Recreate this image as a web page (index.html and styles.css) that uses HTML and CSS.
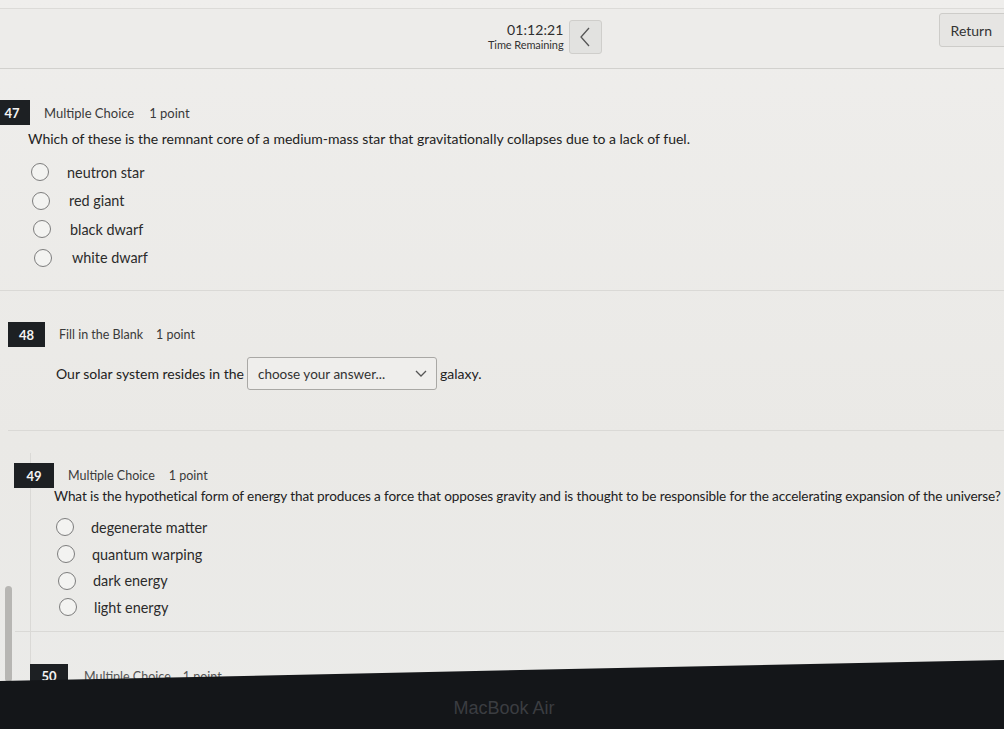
FILE: index.html
```html
<!DOCTYPE html>
<html>
<head>
<meta charset="utf-8">
<link rel="stylesheet" href="styles.css">
</head>
<body>
<div class="screen">
  <div class="header">
    <div class="timer-group">
      <div class="timer">
        <div class="time">01:12:21</div>
        <div class="time-label">Time Remaining</div>
      </div>
      <button class="collapse-btn" aria-label="collapse">
        <svg width="12" height="20" viewBox="0 0 12 20"><path d="M10 1 L2 10 L10 19" fill="none" stroke="#555" stroke-width="1.3"/></svg>
      </button>
    </div>
    <button class="return-btn">Return</button>
  </div>

  <div class="question q47">
    <div class="q-head">
      <span class="badge">47</span>
      <span class="q-type">Multiple Choice</span>
      <span class="q-points">1 point</span>
    </div>
    <div class="q-text">Which of these is the remnant core of a medium-mass star that gravitationally collapses due to a lack of fuel.</div>
    <ul class="options">
      <li><span class="radio"></span><span class="opt">neutron star</span></li>
      <li><span class="radio"></span><span class="opt">red giant</span></li>
      <li><span class="radio"></span><span class="opt">black dwarf</span></li>
      <li><span class="radio"></span><span class="opt">white dwarf</span></li>
    </ul>
  </div>

  <div class="question q48">
    <div class="q-head">
      <span class="badge">48</span>
      <span class="q-type small">Fill in the Blank</span>
      <span class="q-points small">1 point</span>
    </div>
    <div class="blank-line">
      <span>Our solar system resides in the</span>
      <span class="select">
        <span class="select-text">choose your answer...</span>
        <svg width="12" height="8" viewBox="0 0 12 8"><path d="M1 1 L6 6 L11 1" fill="none" stroke="#555" stroke-width="1.3"/></svg>
      </span>
      <span>galaxy.</span>
    </div>
  </div>

  <div class="lower">
    <div class="question q49">
      <div class="q-head">
        <span class="badge">49</span>
        <span class="q-type small">Multiple Choice</span>
        <span class="q-points small">1 point</span>
      </div>
      <div class="q-text">What is the hypothetical form of energy that produces a force that opposes gravity and is thought to be responsible for the accelerating expansion of the universe?</div>
      <ul class="options">
        <li><span class="radio"></span><span class="opt">degenerate matter</span></li>
        <li><span class="radio"></span><span class="opt">quantum warping</span></li>
        <li><span class="radio"></span><span class="opt">dark energy</span></li>
        <li><span class="radio"></span><span class="opt">light energy</span></li>
      </ul>
    </div>

    <div class="question q50">
      <div class="q-head">
        <span class="badge">50</span>
        <span class="q-type small">Multiple Choice</span>
        <span class="q-points small">1 point</span>
      </div>
    </div>
  </div>

  <div class="scrollbar"></div>
  <div class="bezel"><span class="brand">MacBook Air</span></div>
</div>
</body>
</html>
```

FILE: styles.css
```css
* { box-sizing: border-box; }
html, body {
  margin: 0;
  padding: 0;
  width: 1004px;
  height: 729px;
  overflow: hidden;
  background: #ebeae7;
  font-family: Lato, "Open Sans", sans-serif;
  color: #2a2a2a;
}
.screen {
  position: relative;
  width: 1004px;
  height: 729px;
  overflow: hidden;
  background: linear-gradient(180deg, #efeeec 0%, #eae9e6 60%, #ebebe9 100%);
}

/* header */
.header {
  margin-top: 8px;
  height: 61px;
  border-top: 1px solid #dcdbd8;
  border-bottom: 1px solid #d2d1ce;
  display: flex;
  align-items: center;
  background: #edecea;
}
.timer-group {
  display: flex;
  align-items: center;
  gap: 5px;
  margin-left: 488px;
  margin-top: -4px;
}
.timer {
  text-align: right;
  line-height: 1;
}
.time {
  font-size: 14px;
  color: #2f2f2f;
  letter-spacing: 0.1px;
}
.time-label {
  font-size: 11px;
  color: #333;
  margin-top: 2px;
  letter-spacing: -0.1px;
}
.collapse-btn {
  width: 33px;
  height: 34px;
  background: #e2e2e0;
  border: 1px solid #cfcecb;
  border-radius: 3px;
  display: flex;
  align-items: center;
  justify-content: center;
  padding: 0;
}
.return-btn {
  margin-left: auto;
  margin-right: -6px;
  margin-top: -17px;
  height: 34px;
  padding: 0 17px 0 11px;
  background: #e6e5e3;
  border: 1px solid #cdccc9;
  border-radius: 3px;
  font-family: Lato, sans-serif;
  font-size: 14px;
  color: #333;
}

/* questions */
.question {
  border-bottom: 1px solid #dad9d6;
}
.q-head {
  display: flex;
  align-items: center;
  height: 25px;
}
.badge {
  display: inline-flex;
  align-items: center;
  justify-content: center;
  height: 25px;
  background: #1d2023;
  color: #f4f4f4;
  font-weight: 700;
  font-size: 13px;
}
.q-type, .q-points {
  font-size: 13px;
  color: #3a3a3a;
}
.q-type.small, .q-points.small { font-size: 12.5px; }
.q-text {
  font-size: 14px;
  color: #222;
  white-space: nowrap;
}
.options {
  list-style: none;
  margin: 0;
  padding: 0;
}
.options li {
  display: flex;
  align-items: center;
  font-size: 14.4px;
  color: #2b2b2b;
}
.radio {
  width: 18px;
  height: 18px;
  border: 1.3px solid #7d7d7d;
  border-radius: 50%;
  background: #f3f3f1;
  flex: none;
}

/* q47 */
.q47 { padding: 31px 0 18px 0; }
.q47 .badge { width: 36px; margin-left: -6px; }
.q47 .q-type { margin-left: 14px; }
.q47 .q-points { margin-left: 15px; }
.q47 .q-text { margin: 4px 0 0 28px; font-size: 14px; height: 20px; line-height: 20px; }
.q47 .options { margin: 9px 0 0 31px; }
.q47 .options li { height: 28.5px; }
.q47 .options li:nth-child(1) .opt { margin-left: 18px; }
.q47 .options li:nth-child(2) { padding-left: 1px; }
.q47 .options li:nth-child(2) .opt { margin-left: 19px; }
.q47 .options li:nth-child(3) { padding-left: 2px; }
.q47 .options li:nth-child(3) .opt { margin-left: 19px; }
.q47 .options li:nth-child(4) { padding-left: 3px; }
.q47 .options li:nth-child(4) .opt { margin-left: 20px; }

/* q48 */
.q48 { padding: 31px 0 40px 0; margin-left: 8px; }
.q48 .badge { width: 37px; }
.q48 .q-type { margin-left: 14px; }
.q48 .q-points { margin-left: 13px; }
.blank-line {
  display: flex;
  align-items: center;
  gap: 3px;
  margin: 10px 0 0 48px;
  font-size: 14px;
  color: #222;
}
.select {
  width: 190px;
  height: 33px;
  border: 1px solid #a9a8a5;
  border-radius: 3px;
  background: #efeeec;
  display: flex;
  align-items: center;
  justify-content: space-between;
  padding: 0 9px 0 10px;
  font-size: 13.5px;
  color: #333;
}

/* lower area */
.lower { position: relative; }
.lower::before {
  content: "";
  position: absolute;
  left: 30px;
  top: 22px;
  bottom: -60px;
  border-left: 1px solid #dad9d6;
}

/* q49 */
.q49 { padding: 32px 0 10px 0; margin-left: 15px; }
.q49 .badge { width: 40px; margin-left: -1px; position: relative; }
.q49 .q-type { margin-left: 14px; }
.q49 .q-points { margin-left: 14px; }
.q49 .q-text { margin: -2px 0 0 39px; font-size: 13.6px; letter-spacing: -0.12px; height: 20px; line-height: 20px; }
.q49 .options { margin: 8px 0 0 41px; }
.q49 .options li { height: 26.7px; }
.q49 .options li .opt { margin-left: 17px; }
.q49 .options li:nth-child(2) { padding-left: 1px; }
.q49 .options li:nth-child(3) { padding-left: 2px; }
.q49 .options li:nth-child(4) { padding-left: 3px; }

/* q50 */
.q50 { padding: 32px 0 0 0; margin-left: 30px; border-bottom: none; }
.q50 .badge { width: 38px; position: relative; }
.q50 .q-type { margin-left: 16px; color: #555; }
.q50 .q-points { margin-left: 12px; color: #555; }

.scrollbar {
  position: absolute;
  left: 5px;
  top: 586px;
  width: 7px;
  height: 96px;
  border-radius: 4px;
  background: #b7b6b3;
}
.bezel {
  position: absolute;
  left: 0;
  top: 655px;
  width: 1004px;
  height: 74px;
  background: #141619;
  clip-path: polygon(0 26px, 100% 5px, 100% 100%, 0 100%);
  display: flex;
  justify-content: center;
}
.brand {
  margin-top: 43px;
  margin-left: 4px;
  font-family: "Liberation Sans", Arial, sans-serif;
  font-size: 18px;
  color: #3b3d41;
}
```
